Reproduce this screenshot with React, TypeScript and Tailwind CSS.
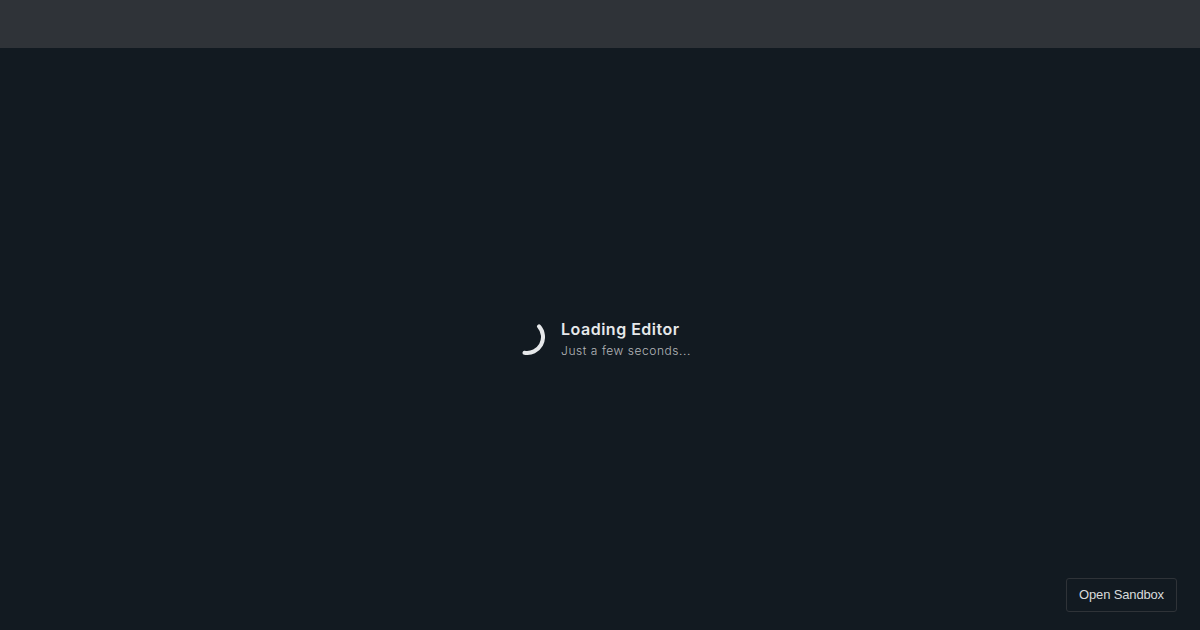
export default function App() {
  return (
    <div className="relative flex h-[630px] w-full flex-col overflow-hidden bg-[#121a21] font-['Inter',sans-serif]">
      {/* Top bar */}
      <div className="h-12 w-full bg-[#2f3338]" />

      {/* Loading message */}
      <div className="flex flex-1 items-center justify-center">
        <div className="flex items-center gap-4">
          <svg className="mb-1 h-9 w-9" viewBox="0 0 36 36" fill="none">
            <path
              d="M30 7.4A16 16 0 0 1 15.5 33.8"
              stroke="#e6e8ea"
              strokeWidth="4"
              strokeLinecap="round"
            />
          </svg>
          <div>
            <div className="text-[16px] font-semibold leading-[22px] tracking-[0.5px] text-[#e6e8ea]">
              Loading Editor
            </div>
            <div className="mt-[2px] text-[12px] font-light leading-[18px] tracking-[0.55px] text-[#b4b7ba]">
              Just a few seconds...
            </div>
          </div>
        </div>
      </div>

      {/* Floating action */}
      <button className="absolute bottom-[18px] right-[23px] h-[34px] w-[111px] rounded-[3px] border border-[#2f3338] font-['Liberation_Sans',sans-serif] text-[13px] tracking-[-0.15px] text-[#d8dadc]">
        Open Sandbox
      </button>
    </div>
  );
}
